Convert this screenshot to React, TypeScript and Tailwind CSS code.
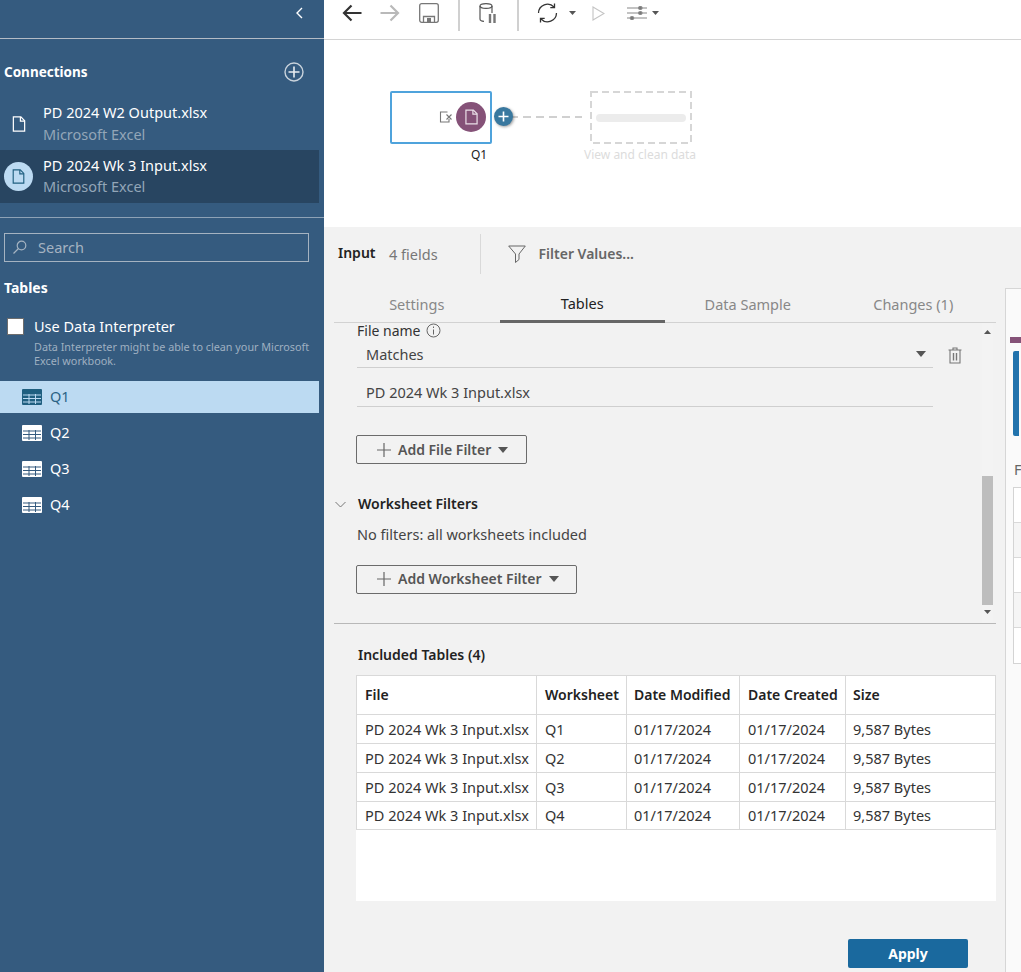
import React from "react";

const DocIcon = ({ className = "", stroke = "#fff" }: { className?: string; stroke?: string }) => (
  <svg className={className} viewBox="0 0 14 17" fill="none" stroke={stroke} strokeWidth="1.3">
    <path d="M1 1h8l4 4v11H1z" />
    <path d="M8.5 1v4.5H13" />
  </svg>
);

const TableIcon = ({ active }: { active?: boolean }) => {
  const dark = "#1f5f80";
  const c = active ? dark : "#fff";
  const g = active ? "#bcdaf2" : "#355b7f";
  return (
    <svg width="20" height="16" viewBox="0 0 20 16" className="shrink-0">
      <rect x="0" y="0" width="20" height="16" rx="1" fill={c} />
      {[5.5, 9, 12.5].map((y) => (
        <rect key={y} x="1" y={y} width="18" height="1" fill={g} />
      ))}
      {[6.5, 13].map((x) => (
        <rect key={x} x={x} y="5" width="1" height="10" fill={g} />
      ))}
    </svg>
  );
};

const Caret = ({ className = "", color = "#555", w = 10, h = 6 }: { className?: string; color?: string; w?: number; h?: number }) => (
  <svg className={className} width={w} height={h} viewBox="0 0 10 6" preserveAspectRatio="none">
    <path d="M0 0h10L5 6z" fill={color} />
  </svg>
);

const AddButton = ({ label, width }: { label: string; width: string }) => (
  <button className={`-ml-px flex h-[29px] items-center rounded-[2px] border border-[#6b6b6b] pl-[19px] text-[14px] font-semibold text-[#555] ${width}`}>
    <svg width="16" height="16" viewBox="0 0 16 16" className="mr-[6px]" stroke="#666" strokeWidth="1.2">
      <path d="M8 1v14M1 8h14" />
    </svg>
    <span>{label}</span>
    <Caret className="ml-[7px]" />
  </button>
);

const rows = ["Q1", "Q2", "Q3", "Q4"];
const colClasses = ["w-[180px] pl-[8px]", "w-[90px] pl-[8px]", "w-[113px] pl-[7px]", "w-[106px] pl-[8px]", "flex-1 pl-[7px]"];

const Row = ({ cells, head, h }: { cells: string[]; head?: boolean; h: string }) => (
  <div className={`flex border-b border-[#d9d9d9] ${h}`}>
    {cells.map((c, i) => (
      <div
        key={c + i}
        className={`flex items-center ${colClasses[i]} ${i < 4 ? "border-r border-[#d9d9d9]" : ""} ${head ? "text-[14px] font-semibold text-[#222]" : "text-[#333]"}`}
      >
        {c}
      </div>
    ))}
  </div>
);

export default function App() {
  return (
    <div className="flex h-[972px] w-[1021px] overflow-hidden bg-white font-['Noto_Sans',sans-serif] text-[14.5px] leading-none">
      {/* Sidebar */}
      <aside className="flex w-[324px] shrink-0 flex-col bg-[#355b7f] text-white">
        <div className="flex h-[39px] shrink-0 items-start justify-end border-b border-[#b4bcc6] pr-[20px] pt-[6px]">
          <svg width="9" height="14" viewBox="0 0 9 14" fill="none" stroke="#fff" strokeWidth="1.4">
            <path d="M7 2 2 7l5 5" />
          </svg>
        </div>
        <div className="flex h-[59px] shrink-0 items-center justify-between pl-[4px] pr-[20px] pt-[6px]">
          <span className="translate-y-px text-[13.5px] font-bold">Connections</span>
          <svg width="20" height="20" viewBox="0 0 20 20" fill="none" stroke="#c9d3dc" strokeWidth="1.4">
            <circle cx="10" cy="10" r="9" />
            <path d="M10 4.5v11M4.5 10h11" stroke="#e8edf1" strokeWidth="1.6" />
          </svg>
        </div>
        <div className="flex h-[52px] shrink-0 items-center pl-[12px]">
          <DocIcon className="h-[16px] w-[14px] shrink-0" />
          <div className="ml-[17px] flex flex-col gap-[8px] pb-[2px]">
            <span>PD 2024 W2 Output.xlsx</span>
            <span className="text-[#93a6b8]">Microsoft Excel</span>
          </div>
        </div>
        <div className="mr-[5px] flex h-[53px] shrink-0 items-center bg-[#284561] pl-[4px]">
          <div className="flex h-[29px] w-[29px] shrink-0 items-center justify-center rounded-full bg-[#bcdaf2]">
            <DocIcon className="h-[15px] w-[13px]" stroke="#1f5f80" />
          </div>
          <div className="ml-[10px] flex flex-col gap-[7px] pb-[2px]">
            <span>PD 2024 Wk 3 Input.xlsx</span>
            <span className="text-[#93a6b8]">Microsoft Excel</span>
          </div>
        </div>
        <div className="mt-[14px] shrink-0 border-t border-[#8ea2b6]" />
        <div className="ml-[4px] mt-[15px] flex h-[29px] w-[305px] shrink-0 items-center border border-[#a5b3c1] pl-[7px]">
          <svg width="15" height="15" viewBox="0 0 15 15" fill="none" stroke="#a5b3c1" strokeWidth="1.2">
            <circle cx="9.5" cy="5.5" r="4.3" />
            <path d="M6.5 8.5 1.5 13.5" />
          </svg>
          <span className="ml-[11px] text-[#a5b3c1]">Search</span>
        </div>
        <div className="ml-[4px] mt-[19px] text-[14px] font-bold">Tables</div>
        <div className="mt-[23px] flex shrink-0 pl-[7px]">
          <div className="h-[17px] w-[17px] shrink-0 border border-[#6d6d6d] bg-white" />
          <div className="ml-[10px]">
            <div className="pt-[1px]">Use Data Interpreter</div>
            <div className="mt-[6px] w-[285px] text-[10.8px] leading-[14px] text-[#9fb0c1]">
              Data Interpreter might be able to clean your Microsoft Excel workbook.
            </div>
          </div>
        </div>
        <div className="mt-[13px] flex flex-col gap-[4px]">
          {rows.map((q, i) => (
            <div
              key={q}
              className={`mr-[5px] flex h-[32px] items-center pl-[22px] ${i === 0 ? "bg-[#bcdaf2] text-[#2a6285]" : ""}`}
            >
              <TableIcon active={i === 0} />
              <span className="ml-[8px]">{q}</span>
            </div>
          ))}
        </div>
      </aside>

      {/* Main */}
      <main className="flex min-w-0 flex-1 flex-col">
        {/* Toolbar */}
        <div className="flex h-[40px] shrink-0 items-start border-b border-[#d4d4d4] pl-[18px]">
          <svg width="20" height="18" viewBox="0 0 20 18" fill="none" stroke="#333" strokeWidth="2.2" className="mt-[4px]">
            <path d="M19.5 9H2M9.5 1.5 2 9l7.5 7.5" />
          </svg>
          <svg width="20" height="18" viewBox="0 0 20 18" fill="none" stroke="#b9b9b9" strokeWidth="2.2" className="ml-[18px] mt-[4px]">
            <path d="M.5 9H18M10.5 1.5 18 9l-7.5 7.5" />
          </svg>
          <svg width="20" height="20" viewBox="0 0 20 20" fill="none" stroke="#777" strokeWidth="1.3" className="ml-[19px] mt-[3px]">
            <rect x=".7" y=".7" width="18.6" height="18.6" rx="2" />
            <path d="M4.5 19v-5.5h11V19" />
            <rect x="8" y="15" width="4" height="4" fill="#777" stroke="none" />
          </svg>
          <div className="ml-[19px] h-[31px] w-[2px] bg-[#d0d0d0]" />
          <svg width="18" height="21" viewBox="0 0 18 21" fill="none" stroke="#555" strokeWidth="1.2" className="ml-[19px] mt-[3px]">
            <ellipse cx="7" cy="3" rx="6" ry="2.4" />
            <path d="M1 3v13c0 1.2 1.6 2.2 4 2.3M13 3v7" />
            <path d="M11 11v9M15.5 11v9" stroke="#777" strokeWidth="2.4" />
          </svg>
          <div className="ml-[20px] h-[31px] w-[2px] bg-[#d0d0d0]" />
          <svg width="21" height="20" viewBox="0 0 21 20" fill="none" stroke="#333" strokeWidth="1.3" className="ml-[18px] mt-[3px]">
            <path d="M1.5 10a9 9 0 0 1 15.5-6M19.5 10A9 9 0 0 1 4 16" />
            <path d="M17.5 .5v4.2h-4.2M3.5 19.5v-4.2h4.2" />
          </svg>
          <Caret className="ml-[11px] mt-[11px]" w={7} h={4} />
          <svg width="13" height="15" viewBox="0 0 13 15" fill="none" stroke="#c4c4c4" strokeWidth="1.1" className="ml-[16px] mt-[6px]">
            <path d="M1 1l11 6.5L1 14z" />
          </svg>
          <svg width="20" height="14" viewBox="0 0 18 14" fill="none" stroke="#888" strokeWidth="1" className="ml-[22px] mt-[6px]" preserveAspectRatio="none">
            <path d="M0 2h18M0 7h18M0 12h18" />
            <circle cx="12" cy="2" r="1.6" fill="#777" />
            <circle cx="12" cy="7" r="1.6" fill="#777" />
            <circle cx="4.5" cy="12" r="1.6" fill="#777" />
          </svg>
          <Caret className="ml-[5px] mt-[11px]" w={7} h={4} />
        </div>

        {/* Flow canvas */}
        <div className="relative h-[187px] shrink-0 bg-white">
          <div className="absolute left-[66px] top-[51px] h-[53px] w-[102px] rounded-[2px] border-2 border-[#4fa3dc]" />
          <svg width="14" height="14" viewBox="0 0 14 14" fill="none" stroke="#777" strokeWidth="1.1" className="absolute left-[115px] top-[70px]">
            <path d="M8.5 2H1.5v10h8.5V9" />
            <path d="M7.5 4.5l5 5M12.5 4.5l-5 5" />
          </svg>
          <div className="absolute left-[132px] top-[62px] flex h-[30px] w-[30px] items-center justify-center rounded-full bg-[#855278]">
            <DocIcon className="h-[16px] w-[13px]" stroke="#eadfe7" />
          </div>
          <svg width="72" height="2" viewBox="0 0 72 2" className="absolute left-[186px] top-[76px]">
            <path d="M0 1h72" stroke="#d0d0d0" strokeWidth="2" strokeDasharray="8 5" />
          </svg>
          <div className="absolute left-[170px] top-[67px] flex h-[19px] w-[19px] items-center justify-center rounded-full bg-[#39789f] shadow-[1px_1px_3px_rgba(0,0,0,0.4)]">
            <svg width="11" height="11" viewBox="0 0 11 11" stroke="#fff" strokeWidth="1.6">
              <path d="M5.5 .5v10M.5 5.5h10" />
            </svg>
          </div>
          <div className="absolute left-[266px] top-[51px] flex h-[53px] w-[102px] items-center justify-center">
            <svg width="102" height="53" viewBox="0 0 102 53" className="absolute inset-0">
              <rect x="1" y="1" width="100" height="51" fill="none" stroke="#d6d6d6" strokeWidth="2" strokeDasharray="7 4" />
            </svg>
            <div className="h-[8px] w-[90px] rounded-full bg-[#ececec]" />
          </div>
          <div className="absolute left-[147px] top-[109px] text-[12px] text-[#222]">Q1</div>
          <div className="absolute left-[260px] top-[109px] text-[12px] text-[#dcdcdc]">View and clean data</div>
        </div>

        {/* Lower panel */}
        <div className="flex min-h-0 flex-1 bg-[#f2f2f2]">
          <div className="flex w-[681px] shrink-0 flex-col pl-[10px]">
            <div className="flex h-[47px] shrink-0 items-center pt-[7px]">
              <span className="ml-[4px] w-[51px] -translate-y-px text-[14px] font-semibold text-[#222]">Input</span>
              <span className="text-[#777]">4 fields</span>
              <div className="ml-[42px] h-[40px] w-px bg-[#d9d9d9]" />
              <svg width="18" height="19" viewBox="0 0 18 19" fill="none" stroke="#666" strokeWidth="1" className="ml-[27px]">
                <path d="M.7 1h16.6L11 9v5.5L7.5 17.5V9z" />
              </svg>
              <span className="ml-[13px] text-[14px] font-semibold text-[#666]">Filter Values...</span>
            </div>
            <div className="grid h-[49px] w-[662px] shrink-0 grid-cols-4 border-b border-[#d2d2d2] pt-[23px] text-[#888]">
              <div className="text-center">Settings</div>
              <div className="-mb-px -mt-px border-b-[3px] border-[#666] text-center text-[#222]">Tables</div>
              <div className="text-center">Data Sample</div>
              <div className="text-center">Changes (1)</div>
            </div>

            {/* Filter scroller */}
            <div className="flex h-[301px] w-[662px] shrink-0 border-b border-[#b8b8b8]">
              <div className="w-[648px] pl-[23px]">
                <div className="flex items-center text-[14px] text-[#333]">
                  <span>File name</span>
                  <svg width="15" height="15" viewBox="0 0 15 15" fill="none" stroke="#666" className="ml-[5px]">
                    <circle cx="7.5" cy="7.5" r="6.5" />
                    <path d="M7.5 6.5v5M7.5 3.5v1.5" />
                  </svg>
                </div>
                <div className="flex items-start">
                  <div className="mt-[2px] flex h-[28px] w-[576px] items-center justify-between border-b border-[#cfcfcf] pl-[9px] pr-[7px] text-[#444]">
                    <span className="pt-[1px]">Matches</span>
                    <Caret color="#555" />
                  </div>
                  <svg width="14" height="17" viewBox="0 0 14 17" fill="none" stroke="#777" strokeWidth="1.1" className="ml-[15px] mt-[9px]">
                    <path d="M.5 3h13M5 3V1h4v2M2 3v13h10V3" />
                    <path d="M5.5 6v7.5M8.5 6v7.5" strokeWidth="1.4" />
                  </svg>
                </div>
                <div className="mt-[8px] flex h-[31px] w-[576px] items-center border-b border-[#cfcfcf] pl-[9px] pt-[2px] text-[#444]">
                  PD 2024 Wk 3 Input.xlsx
                </div>
                <div className="mt-[28px]">
                  <AddButton label="Add File Filter" width="w-[171px]" />
                </div>
                <div className="-ml-[22px] mt-[33px] flex items-center">
                  <svg width="11" height="7" viewBox="0 0 11 7" fill="none" stroke="#777" strokeWidth="1">
                    <path d="M.5 1l5 5 5-5" />
                  </svg>
                  <span className="ml-[12px] text-[14px] font-semibold text-[#222]">Worksheet Filters</span>
                </div>
                <div className="mt-[16px] text-[#444]">No filters: all worksheets included</div>
                <div className="mt-[23px]">
                  <AddButton label="Add Worksheet Filter" width="w-[221px]" />
                </div>
              </div>
              <div className="flex w-[11px] flex-col items-center bg-[#f3f3f3]">
                <svg width="7" height="4" viewBox="0 0 7 4" className="mt-[7px]">
                  <path d="M3.5 0 7 4H0z" fill="#555" />
                </svg>
                <div className="mt-[142px] h-[129px] w-[11px] bg-[#bdbdbd]" />
                <svg width="7" height="4" viewBox="0 0 7 4" className="mt-[5px]">
                  <path d="M0 0h7L3.5 4z" fill="#555" />
                </svg>
              </div>
            </div>

            {/* Included tables */}
            <div className="ml-[24px] mt-[24px] text-[14px] font-semibold text-[#222]">Included Tables (4)</div>
            <div className="ml-[22px] mt-[13px] h-[226px] w-[640px] bg-white">
              <div className="border-x border-t border-[#d9d9d9]">
                <Row h="h-[39px]" head cells={["File", "Worksheet", "Date Modified", "Date Created", "Size"]} />
                {rows.map((q, i) => (
                  <Row key={q} h={i === 3 ? "h-[28px]" : "h-[29px]"} cells={["PD 2024 Wk 3 Input.xlsx", q, "01/17/2024", "01/17/2024", "9,587 Bytes"]} />
                ))}
              </div>
            </div>
            <div className="ml-[514px] mt-[38px] flex h-[29px] w-[120px] shrink-0 items-center justify-center rounded-[2px] bg-[#1a699e] pt-[1px] text-[14px] font-bold text-white">
              Apply
            </div>
          </div>

          {/* Right-hand panel */}
          <div className="mt-[61px] flex-1 border-l border-t border-[#d6d6d6] bg-[#fafafa] pl-[4px]">
            <div className="mt-[48px] h-[6px] bg-[#855278]" />
            <div className="ml-[3px] mt-[8px] h-[85px] w-[6px] rounded-l-[2px] bg-[#2273ad]" />
            <div className="ml-[4px] mt-[26px] text-[#666]">F</div>
            <div className="ml-[3px] mt-[10px] border-y border-l border-[#d4d4d4]">
              {[0, 1, 2, 3, 4].map((i) => (
                <div key={i} className={`h-[35px] border-[#d9d9d9] ${i < 4 ? "border-b" : ""} ${i % 2 === 1 ? "bg-[#f5f5f5]" : "bg-white"}`} />
              ))}
            </div>
          </div>
        </div>
      </main>
    </div>
  );
}
